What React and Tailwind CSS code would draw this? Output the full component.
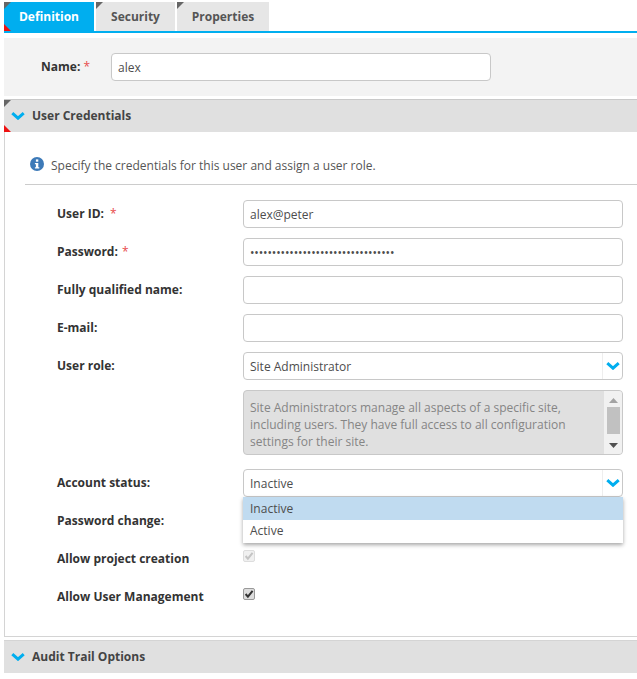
import React from "react";

const Corner = ({ red, bottom }) => (
  <svg
    className={`absolute left-0 ${bottom ? "bottom-0" : "top-0"}`}
    width="7"
    height="7"
    viewBox="0 0 7 7"
  >
    <polygon points={bottom ? "0,0 7,7 0,7" : "0,0 7,0 0,7"} fill={red ? "#ee1111" : "#666666"} />
  </svg>
);

const Chevron = ({ w = 14, h = 8 }) => (
  <svg width={w} height={h} viewBox="0 0 14 8" fill="none">
    <path d="M1.3 1.2 7 6.2 12.7 1.2" stroke="#00aeef" strokeWidth="3" />
  </svg>
);

const Tab = ({ active, w, children }) => (
  <div
    className={`relative h-[29px] flex items-center justify-center text-[12px] font-bold ${w} ${
      active ? "bg-[#00aeef] text-white" : "bg-[#e6e6e6] text-[#555555]"
    }`}
  >
    <Corner red={false} />
    {active && <Corner red bottom />}
    {children}
  </div>
);

const Label = ({ children, req, gap }) => (
  <div className="w-[186px] text-[12px] font-bold text-[#333333] leading-[18px]">
    {children}
    {req && <span className={`text-[#e84c4c] font-normal ${gap}`}>*</span>}
  </div>
);

const inputCls =
  "h-[28px] w-[380px] rounded-[4px] border border-[#c8c8c8] bg-white px-[6px] flex items-center text-[12px] text-[#4d4d4d]";

const Row = ({ label, req, gap, children }) => (
  <div className="flex mb-[10px]">
    <div className="pt-[5px]">
      <Label req={req} gap={gap}>
        {label}
      </Label>
    </div>
    {children}
  </div>
);

const Select = ({ value }) => (
  <div className={`${inputCls} !pr-0 justify-between`}>
    <span className="pt-[1px]">{value}</span>
    <span className="w-[20px] h-full border-l border-[#eeeeee] flex items-center justify-center">
      <Chevron w={14} h={8} />
    </span>
  </div>
);

const Check = ({ disabled }) => (
  <div
    className={`w-[12px] h-[12px] rounded-[2px] border flex items-center justify-center ${
      disabled ? "border-[#dddddd] bg-[#f0f0f0]" : "border-[#999999] bg-[#dddddd]"
    }`}
  >
    <svg width="10" height="10" viewBox="0 0 10 10" fill="none">
      <path d="M1.6 5 3.9 7.6 8.6 1.8" stroke={disabled ? "#c4c4c4" : "#333333"} strokeWidth="2" />
    </svg>
  </div>
);

const SectionHeader = ({ children, corners }) => (
  <div className="relative h-[32px] bg-[#e0e0e0] flex items-center pl-[7px] gap-[7px]">
    {corners && <Corner />}
    {corners && <Corner red bottom />}
    <Chevron />
    <span className="text-[12px] font-bold text-[#444444]">{children}</span>
  </div>
);

export default function App() {
  return (
    <div
      className="w-[637px] h-[679px] overflow-hidden bg-white pl-[4px] pt-[2px]"
      style={{ fontFamily: '"Open Sans", sans-serif' }}
    >
      <div className="flex gap-[2px] border-b-2 border-[#00aeef] h-[31px]">
        <Tab active w="w-[90px]">Definition</Tab>
        <Tab w="w-[79px]">Security</Tab>
        <Tab w="w-[92px]">Properties</Tab>
      </div>

      <div className="mt-[5px] h-[58px] bg-[#f3f3f3] flex items-center">
        <div className="w-[107px] pl-[37px] text-[12px] font-bold text-[#333333]">
          Name: <span className="text-[#e84c4c] font-normal">*</span>
        </div>
        <div className={`${inputCls} pt-[1px]`}>alex</div>
      </div>

      <div className="mt-[3px] border-t border-[#c9c9c9]">
        <SectionHeader corners>User Credentials</SectionHeader>
      </div>

      <div className="h-[505px] border-l border-b border-[#d4d4d4] relative">
        <div className="ml-[20px] pt-[23px] pb-[9px] pl-[5px] flex items-center gap-[6px] border-b border-[#cccccc] h-[53px]">
          <svg className="-mt-[2px]" width="15" height="15" viewBox="0 0 15 15">
            <circle cx="7" cy="7" r="7" fill="#3d7ab8" />
            <rect x="5.9" y="2.4" width="2.4" height="2.3" fill="#fff" />
            <path d="M4.9 6h3.4v4.3h1v1.2H4.9v-1.2h1V7.2h-1z" fill="#fff" />
          </svg>
          <span className="text-[12px] text-[#555555] pt-[1px]">
            Specify the credentials for this user and assign a user role.
          </span>
        </div>

        <div className="pl-[52px] pt-[15px]">
          <Row label="User ID:" req gap="ml-[6px]">
            <div className={`${inputCls} pt-[1px]`}>alex@peter</div>
          </Row>
          <Row label="Password:" req gap="ml-[4px]">
            <div className={`${inputCls} pt-[1px] tracking-[-0.14px]`}>
              {"•".repeat(33)}
            </div>
          </Row>
          <Row label="Fully qualified name:">
            <div className={inputCls}></div>
          </Row>
          <Row label="E-mail:">
            <div className={inputCls}></div>
          </Row>
          <Row label="User role:">
            <Select value="Site Administrator" />
          </Row>

          <div className="ml-[186px] w-[380px] h-[65px] rounded-[4px] border border-[#c8c8c8] bg-[#e0e0e0] flex mb-[14px] overflow-hidden">
            <div className="flex-1 pl-[6px] pt-[8px] text-[12px] leading-[17px] text-[#858585]">
              Site Administrators manage all aspects of a specific site,
              <br />
              including users. They have full access to all configuration
              <br />
              settings for their site.
            </div>
            <div className="w-[18px] bg-[#f1f1f1] flex flex-col items-center pt-[7px] pb-[6px]">
              <svg width="9" height="5" viewBox="0 0 9 5"><polygon points="4.5,0 9,5 0,5" fill="#a3a3a3" /></svg>
              <div className="w-[13px] h-[27px] bg-[#c1c1c1] mt-[4px]" />
              <svg className="mt-auto" width="9" height="5" viewBox="0 0 9 5"><polygon points="0,0 9,0 4.5,5" fill="#505050" /></svg>
            </div>
          </div>

          <div className="relative">
            <Row label="Account status:">
              <Select value="Inactive" />
            </Row>
            <div className="absolute left-[186px] top-[28px] w-[380px] h-[46px] bg-white shadow-[0_2px_4px_rgba(0,0,0,0.35)] z-10 text-[12px] text-[#4d4d4d]">
              <div className="h-[23px] bg-[#c0dbf0] px-[7px] flex items-center">Inactive</div>
              <div className="h-[23px] px-[7px] pb-[2px] flex items-center">Active</div>
            </div>
          </div>

          <Row label="Password change:">
            <div className="h-[28px]" />
          </Row>

          <div className="flex h-[28px] mb-[10px]">
            <div className="pt-[5px]"><Label>Allow project creation</Label></div>
            <div className="pt-[5px]"><Check disabled /></div>
          </div>
          <div className="flex h-[28px]">
            <div className="pt-[5px]"><Label>Allow User Management</Label></div>
            <div className="pt-[5px]"><Check /></div>
          </div>
        </div>
      </div>

      <div className="mt-[3px] border-t border-[#d4d4d4]">
        <SectionHeader>Audit Trail Options</SectionHeader>
      </div>
    </div>
  );
}
